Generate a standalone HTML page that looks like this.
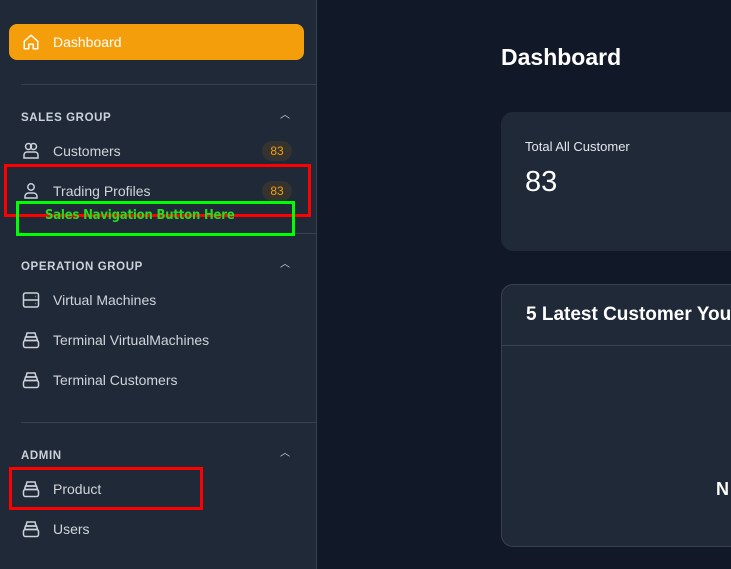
<!DOCTYPE html>
<html><head><meta charset="utf-8"><style>
*{margin:0;padding:0;box-sizing:border-box}
body{width:731px;height:569px;overflow:hidden;background:#111827;font-family:"Liberation Sans",sans-serif;position:relative;color:#e5e7eb}
.sb{position:absolute;left:0;top:0;width:317px;height:569px;background:#1f2937;border-right:1px solid #374151}
.abs{position:absolute}
.dash{left:9px;top:24px;width:295px;height:36px;background:#f59e0b;border-radius:8px;color:#fff;font-size:14px}
.dash span{position:absolute;left:44px;top:10px}
.sep{height:1px;background:#374151;left:21px;width:295px}
.grp{left:21px;font-size:11.5px;font-weight:bold;letter-spacing:.6px;color:#cbd2dc}
.car{left:280px;font-size:10px;color:#cbd2dc}
.it{left:53px;font-size:14px;color:#d1d5db}
.ic{left:22px}
.badge{left:262px;width:30px;height:20px;border-radius:10px;background:#35332f;color:#f59e0b;font-size:12px;text-align:center;line-height:20px}
.card{background:#1f2937;border-radius:12px}
</style></head><body>
<div class="sb">
<div class="abs dash"><svg class="abs" style="left:13px;top:9px" width="18" height="18" viewBox="0 0 24 24" fill="none" stroke="#fff" stroke-width="2" stroke-linejoin="round"><path d="M3 11L12 3l9 8v10H15v-6H9v6H3z"/></svg><span>Dashboard</span></div>
<div class="abs sep" style="top:84px"></div>
<div class="abs grp" style="top:112px">SALES GROUP</div><div class="abs car" style="top:106px">︿</div>
<svg class="abs ic" style="top:142px" width="18" height="18" viewBox="0 0 18 18" fill="none" stroke="#cbd2dc" stroke-width="1.5"><circle cx="6.5" cy="4.5" r="3"/><circle cx="11.5" cy="4.5" r="3"/><path d="M2 16v-3a3 3 0 0 1 3-3h8a3 3 0 0 1 3 3v3z"/></svg>
<div class="abs it" style="top:143px">Customers</div><div class="abs badge" style="top:141px">83</div>
<svg class="abs ic" style="top:182px" width="18" height="18" viewBox="0 0 18 18" fill="none" stroke="#cbd2dc" stroke-width="1.5"><circle cx="9" cy="5" r="3.2"/><path d="M3 16v-1.5a3.5 3.5 0 0 1 3.5-3.5h5a3.5 3.5 0 0 1 3.5 3.5V16z"/></svg>
<div class="abs it" style="top:183px">Trading Profiles</div><div class="abs badge" style="top:181px">83</div>
<div class="abs sep" style="top:233px"></div>
<div class="abs grp" style="top:261px">OPERATION GROUP</div><div class="abs car" style="top:255px">︿</div>
<svg class="abs ic" style="top:291px" width="18" height="18" viewBox="0 0 18 18" fill="none" stroke="#cbd2dc" stroke-width="1.5"><rect x="1.5" y="2" width="15" height="14" rx="2"/><path d="M1.5 9h15M13 5.5h.5M13 12.5h.5"/></svg>
<div class="abs it" style="top:292px">Virtual Machines</div>
<svg class="abs ic" style="top:331px" width="18" height="18" viewBox="0 0 18 18" fill="none" stroke="#cbd2dc" stroke-width="1.5"><path d="M5 2h8l1 4H4z"/><path d="M3.5 6h11l1 3.5H2.5z"/><rect x="1.5" y="9.5" width="15" height="7" rx="2"/></svg>
<div class="abs it" style="top:332px">Terminal VirtualMachines</div>
<svg class="abs ic" style="top:371px" width="18" height="18" viewBox="0 0 18 18" fill="none" stroke="#cbd2dc" stroke-width="1.5"><path d="M5 2h8l1 4H4z"/><path d="M3.5 6h11l1 3.5H2.5z"/><rect x="1.5" y="9.5" width="15" height="7" rx="2"/></svg>
<div class="abs it" style="top:372px">Terminal Customers</div>
<div class="abs sep" style="top:422px"></div>
<div class="abs grp" style="top:450px">ADMIN</div><div class="abs car" style="top:444px">︿</div>
<svg class="abs ic" style="top:480px" width="18" height="18" viewBox="0 0 18 18" fill="none" stroke="#cbd2dc" stroke-width="1.5"><path d="M5 2h8l1 4H4z"/><path d="M3.5 6h11l1 3.5H2.5z"/><rect x="1.5" y="9.5" width="15" height="7" rx="2"/></svg>
<div class="abs it" style="top:481px">Product</div>
<svg class="abs ic" style="top:520px" width="18" height="18" viewBox="0 0 18 18" fill="none" stroke="#cbd2dc" stroke-width="1.5"><path d="M5 2h8l1 4H4z"/><path d="M3.5 6h11l1 3.5H2.5z"/><rect x="1.5" y="9.5" width="15" height="7" rx="2"/></svg>
<div class="abs it" style="top:521px">Users</div>
</div>
<div class="abs" style="left:4px;top:164px;width:307px;height:53px;border:3px solid #ff0000"></div>
<div class="abs" style="left:16px;top:201px;width:279px;height:35px;border:3px solid #00ff00"></div>
<div class="abs" style="left:45px;top:208px;font-size:13px;font-weight:bold;color:#22dd22;font-family:'DejaVu Sans Condensed','Liberation Sans Narrow',sans-serif;letter-spacing:-.2px">Sales Navigation Button Here</div>
<div class="abs" style="left:9px;top:467px;width:194px;height:43px;border:3px solid #ff0000"></div>
<div class="abs" style="left:501px;top:44px;font-size:23px;font-weight:bold;color:#fff">Dashboard</div>
<div class="abs card" style="left:501px;top:112px;width:260px;height:139px"></div>
<div class="abs" style="left:525px;top:139px;font-size:13px;color:#e5e7eb">Total All Customer</div>
<div class="abs" style="left:525px;top:166px;font-size:29px;color:#fff">83</div>
<div class="abs card" style="left:501px;top:284px;width:260px;height:263px;border:1px solid #374151"></div>
<div class="abs" style="left:502px;top:345px;width:240px;height:1px;background:#374151"></div>
<div class="abs" style="left:526px;top:304px;font-size:19px;font-weight:bold;color:#fff;white-space:nowrap">5 Latest Customer You</div>
<div class="abs" style="left:716px;top:479px;font-size:18px;font-weight:bold;color:#fff">N</div>
</body></html>
